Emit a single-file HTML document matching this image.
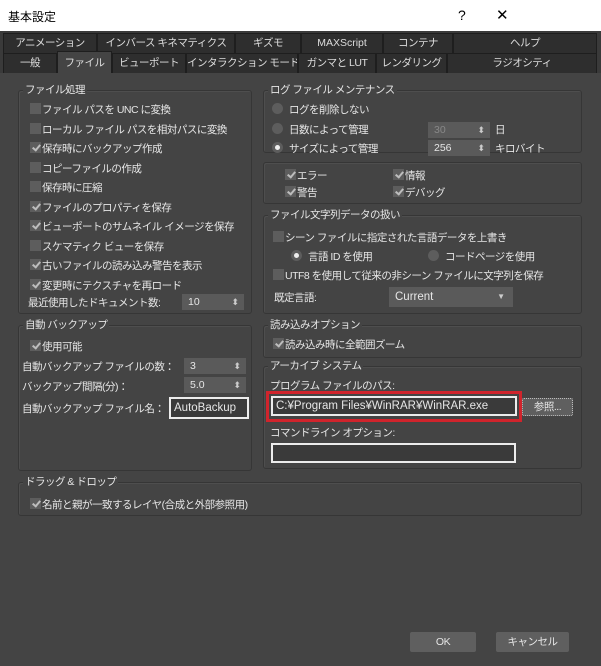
<!DOCTYPE html><html><head><meta charset="utf-8"><style>
*{margin:0;padding:0;box-sizing:border-box}
body{width:601px;height:666px;background:#444;font-family:"Liberation Sans","Noto Sans CJK JP",sans-serif;font-size:10.5px;letter-spacing:-0.5px;color:#e6e6e6;position:relative;overflow:hidden}
.a{position:absolute;white-space:nowrap}
.title{left:0;top:0;width:601px;height:31px;background:#fff;color:#000;font-size:12px;letter-spacing:0}
.tab{position:absolute;height:20px;background:#2e2e2e;border:1px solid #1e1e1e;border-bottom:none;text-align:center;line-height:19px;font-size:10.5px;color:#ddd;white-space:nowrap;overflow:hidden}
.grp{position:absolute;border:1px solid #363636;border-radius:3px;box-shadow:1px 1px 0 #4e4e4e inset}
.gl{position:absolute;top:-8px;left:4px;background:#444;padding:0 2px;line-height:14px;white-space:nowrap}
.cb{position:absolute;width:11px;height:11px;background:#5d5d5d}
.cb.c::after{content:"";position:absolute;width:3px;height:6px;border:solid #bdbdbd;border-width:0 2px 2px 0;transform:rotate(40deg);left:4px;top:1px}
.rd{position:absolute;width:11px;height:11px;border-radius:50%;background:#5d5d5d}
.rd.c::after{content:"";position:absolute;left:3px;top:3px;width:5px;height:5px;border-radius:50%;background:#eee}
.sp{position:absolute;height:16px;background:#5a5a5a;padding-left:6px;line-height:16px;letter-spacing:0}
.sp .ar{position:absolute;right:5px;top:0;font-size:9px;color:#ccc}
.tx{position:absolute;height:20px;border:2px solid #ececec;background:#3a3a3a;line-height:16px;padding-left:3px;font-size:11.5px;letter-spacing:0}
.btn{position:absolute;height:20px;background:#5f5f5f;border-radius:2px;text-align:center;line-height:20px}
</style></head><body>
<div class="a title"><span class="a" style="left:8px;top:8px">基本設定</span><span class="a" style="left:458px;top:7px;font-size:14px">?</span><span class="a" style="left:496px;top:6px;font-size:15px;font-family:'DejaVu Sans',sans-serif">✕</span></div>
<div style="position:absolute;left:0;top:31px;width:601px;height:42px;background:#3a3a3a"></div>
<div class="tab" style="left:3px;top:33px;width:94px">アニメーション</div>
<div class="tab" style="left:97px;top:33px;width:138px">インバース キネマティクス</div>
<div class="tab" style="left:235px;top:33px;width:66px">ギズモ</div>
<div class="tab" style="left:301px;top:33px;width:82px;letter-spacing:0">MAXScript</div>
<div class="tab" style="left:383px;top:33px;width:70px">コンテナ</div>
<div class="tab" style="left:453px;top:33px;width:144px">ヘルプ</div>
<div class="tab" style="left:3px;top:53px;width:54px">一般</div>
<div class="tab" style="left:57px;top:51px;width:55px;height:22px;background:#444;line-height:23px">ファイル</div>
<div class="tab" style="left:112px;top:53px;width:74px">ビューポート</div>
<div class="tab" style="left:186px;top:53px;width:112px">インタラクション モード</div>
<div class="tab" style="left:298px;top:53px;width:78px">ガンマと LUT</div>
<div class="tab" style="left:376px;top:53px;width:71px">レンダリング</div>
<div class="tab" style="left:447px;top:53px;width:150px">ラジオシティ</div>

<div class="grp" style="left:18px;top:90px;width:234px;height:224px"><span class="gl">ファイル処理</span></div>
<div class="cb" style="left:30px;top:103px"></div><span class="a" style="left:42px;top:102px">ファイル パスを UNC に変換</span>
<div class="cb" style="left:30px;top:123px"></div><span class="a" style="left:42px;top:122px">ローカル ファイル パスを相対パスに変換</span>
<div class="cb c" style="left:30px;top:142px"></div><span class="a" style="left:42px;top:141px">保存時にバックアップ作成</span>
<div class="cb" style="left:30px;top:162px"></div><span class="a" style="left:42px;top:161px">コピーファイルの作成</span>
<div class="cb" style="left:30px;top:181px"></div><span class="a" style="left:42px;top:180px">保存時に圧縮</span>
<div class="cb c" style="left:30px;top:201px"></div><span class="a" style="left:42px;top:200px">ファイルのプロパティを保存</span>
<div class="cb c" style="left:30px;top:220px"></div><span class="a" style="left:42px;top:219px">ビューポートのサムネイル イメージを保存</span>
<div class="cb" style="left:30px;top:240px"></div><span class="a" style="left:42px;top:239px">スケマティク ビューを保存</span>
<div class="cb c" style="left:30px;top:259px"></div><span class="a" style="left:42px;top:258px">古いファイルの読み込み警告を表示</span>
<div class="cb c" style="left:30px;top:279px"></div><span class="a" style="left:42px;top:278px">変更時にテクスチャを再ロード</span>
<span class="a" style="left:28px;top:295px">最近使用したドキュメント数:</span><div class="sp" style="left:182px;top:294px;width:62px">10<span class="ar">⬍</span></div>

<div class="grp" style="left:263px;top:90px;width:319px;height:63px"><span class="gl">ログ ファイル メンテナンス</span></div>
<div class="rd" style="left:272px;top:103px"></div><span class="a" style="left:289px;top:102px">ログを削除しない</span>
<div class="rd" style="left:272px;top:123px"></div><span class="a" style="left:289px;top:122px">日数によって管理</span>
<div class="sp" style="left:428px;top:122px;width:62px;color:#888">30<span class="ar">⬍</span></div><span class="a" style="left:495px;top:122px">日</span>
<div class="rd c" style="left:272px;top:142px"></div><span class="a" style="left:289px;top:141px">サイズによって管理</span>
<div class="sp" style="left:428px;top:140px;width:62px">256<span class="ar">⬍</span></div><span class="a" style="left:495px;top:141px">キロバイト</span>
<div class="grp" style="left:263px;top:162px;width:319px;height:42px"></div>
<div class="cb c" style="left:285px;top:169px"></div><span class="a" style="left:297px;top:168px">エラー</span>
<div class="cb c" style="left:393px;top:169px"></div><span class="a" style="left:405px;top:168px">情報</span>
<div class="cb c" style="left:285px;top:186px"></div><span class="a" style="left:297px;top:185px">警告</span>
<div class="cb c" style="left:393px;top:186px"></div><span class="a" style="left:405px;top:185px">デバッグ</span>
<div class="grp" style="left:263px;top:215px;width:319px;height:99px"><span class="gl">ファイル文字列データの扱い</span></div>
<div class="cb" style="left:273px;top:231px"></div><span class="a" style="left:285px;top:230px">シーン ファイルに指定された言語データを上書き</span>
<div class="rd c" style="left:291px;top:250px"></div><span class="a" style="left:308px;top:249px">言語 ID を使用</span>
<div class="rd" style="left:428px;top:250px"></div><span class="a" style="left:445px;top:249px">コードページを使用</span>
<div class="cb" style="left:273px;top:269px"></div><span class="a" style="left:285px;top:268px">UTF8 を使用して従来の非シーン ファイルに文字列を保存</span>
<span class="a" style="left:274px;top:290px">既定言語:</span><div class="sp" style="left:389px;top:287px;width:124px;height:20px;line-height:20px;font-size:11.5px">Current<span class="ar" style="right:8px;font-size:8px">▼</span></div>

<div class="grp" style="left:18px;top:325px;width:234px;height:146px"><span class="gl">自動 バックアップ</span></div>
<div class="cb c" style="left:30px;top:340px"></div><span class="a" style="left:42px;top:339px">使用可能</span>
<span class="a" style="left:22px;top:359px">自動バックアップ ファイルの数：</span><div class="sp" style="left:184px;top:358px;width:62px">3<span class="ar">⬍</span></div>
<span class="a" style="left:22px;top:379px">バックアップ間隔(分)：</span><div class="sp" style="left:184px;top:377px;width:62px">5.0<span class="ar">⬍</span></div>
<span class="a" style="left:22px;top:401px">自動バックアップ ファイル名：</span><div class="tx" style="left:169px;top:397px;width:80px;height:22px;line-height:18px">AutoBackup</div>

<div class="grp" style="left:263px;top:325px;width:319px;height:33px"><span class="gl">読み込みオプション</span></div>
<div class="cb c" style="left:273px;top:338px"></div><span class="a" style="left:285px;top:337px">読み込み時に全範囲ズーム</span>
<div class="grp" style="left:263px;top:366px;width:319px;height:103px"><span class="gl">アーカイブ システム</span></div>
<span class="a" style="left:270px;top:378px">プログラム ファイルのパス:</span>
<div style="position:absolute;left:266px;top:391px;width:256px;height:31px;border:3px solid #d0242c"></div>
<div class="tx" style="left:271px;top:396px;width:246px">C:¥Program Files¥WinRAR¥WinRAR.exe</div>
<div class="btn" style="left:522px;top:398px;width:51px;height:18px;line-height:16px;border:1px dotted #bbb">参照...</div>
<span class="a" style="left:270px;top:425px">コマンドライン オプション:</span>
<div class="tx" style="left:271px;top:443px;width:245px"></div>

<div class="grp" style="left:18px;top:482px;width:564px;height:34px"><span class="gl">ドラッグ &amp; ドロップ</span></div>
<div class="cb c" style="left:30px;top:498px"></div><span class="a" style="left:42px;top:497px">名前と親が一致するレイヤ(合成と外部参照用)</span>

<div class="btn" style="left:410px;top:632px;width:66px">OK</div>
<div class="btn" style="left:496px;top:632px;width:73px">キャンセル</div>
</body></html>
